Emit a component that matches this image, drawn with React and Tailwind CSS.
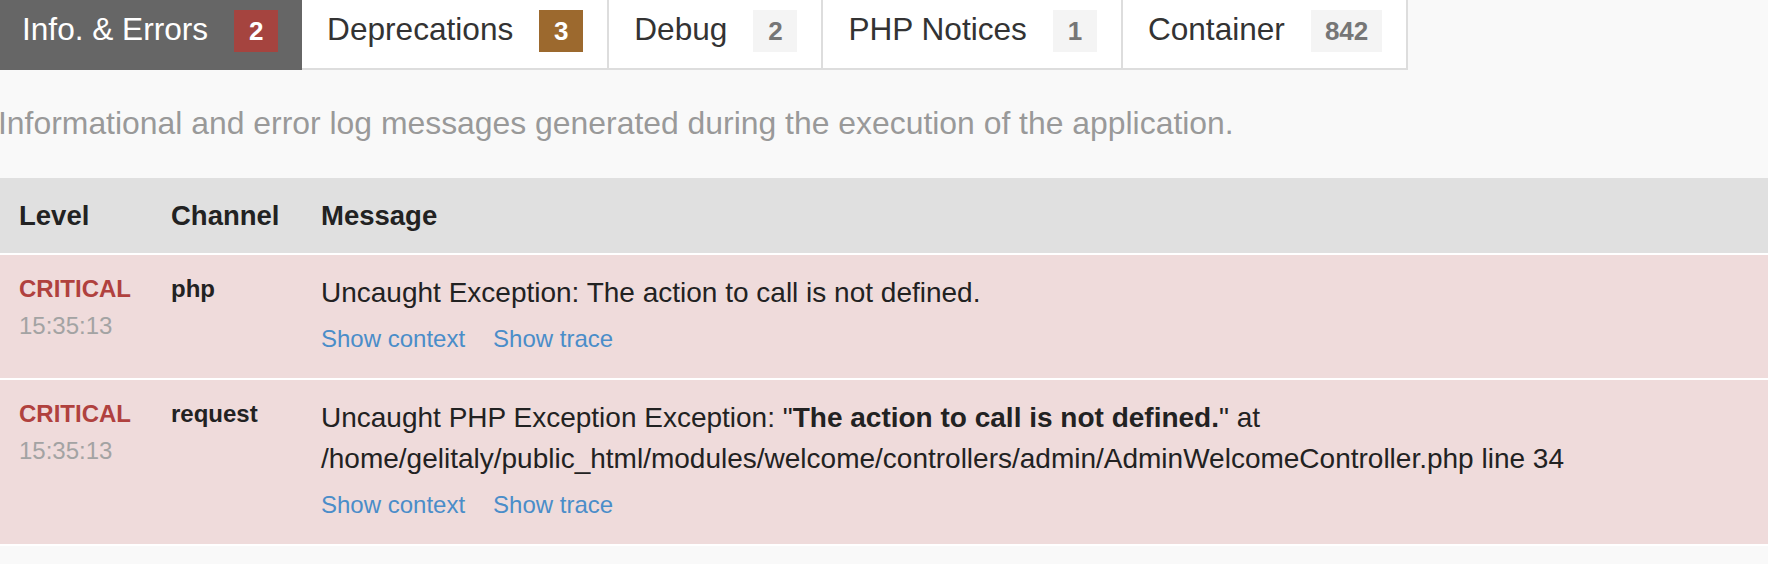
import React from 'react';

const tabs = [
    { label: 'Info. & Errors', count: 2, active: true, badge: 'bg-[#a5443f] text-white' },
    { label: 'Deprecations', count: 3, badge: 'bg-[#9c692e] text-white' },
    { label: 'Debug', count: 2, badge: 'bg-[#f4f4f4] text-[#767676]' },
    { label: 'PHP Notices', count: 1, badge: 'bg-[#f4f4f4] text-[#767676]' },
    { label: 'Container', count: 842, badge: 'bg-[#f4f4f4] text-[#767676]' },
];

function Tab({ tab, first }) {
    return (
        <div
            className={`flex items-start gap-[26px] h-[70px] pt-[10px] border-b-2 ${first ? 'pl-[22px] pr-[24px]' : 'pl-[25px] pr-[24px] border-r-2'} ${tab.active ? 'bg-[#666] border-[#666] text-white' : 'bg-white border-[#dddddd] text-[#333]'}`}
        >
            <span className="text-[31.6px] leading-[38px] whitespace-nowrap">{tab.label}</span>
            <span className={`h-[42px] min-w-[44px] px-[14px] flex items-center justify-center text-[26px] font-bold ${tab.badge}`}>
                {tab.count}
            </span>
        </div>
    );
}

function LogRow({ channel, children }) {
    return (
        <div className="grid grid-cols-[152px_150px_1fr] bg-[#efdbdb] border-b-2 border-white">
            <div className="pl-[19px] pt-[15px] text-[24px] leading-[37px]">
                <div className="font-bold text-[#b0413e]">CRITICAL</div>
                <div className="text-[#a3a3a3]">15:35:13</div>
            </div>
            <div className="pl-[19px] pt-[15px] text-[24px] leading-[37px] font-bold text-[#222]">{channel}</div>
            <div className="pl-[19px] pr-[20px] pt-[17px] pb-[23px]">
                <div className="text-[28px] leading-[41px] text-[#222]">{children}</div>
                <div className="mt-[10px] flex gap-[28px] text-[24px] leading-[32px] text-[#4a8dc9]">
                    <a href="#">Show context</a>
                    <a href="#">Show trace</a>
                </div>
            </div>
        </div>
    );
}

export default function App() {
    return (
        <div className="min-h-[564px] bg-[#f9f9f9] font-['Liberation_Sans',Arial,sans-serif] overflow-hidden">
            <div className="flex">
                {tabs.map((t, i) => (
                    <Tab key={t.label} tab={t} first={i === 0} />
                ))}
            </div>

            <p className="ml-[-2px] pt-[31px] pb-[32px] text-[31.9px] leading-[45px] text-[#999] whitespace-nowrap">
                Informational and error log messages generated during the execution of the application.
            </p>

            <div className="grid grid-cols-[152px_150px_1fr] h-[77px] items-center bg-[#e0e0e0] border-b-2 border-white text-[27.5px] font-bold text-[#222]">
                <div className="pl-[19px]">Level</div>
                <div className="pl-[19px]">Channel</div>
                <div className="pl-[19px]">Message</div>
            </div>

            <LogRow channel="php">Uncaught Exception: The action to call is not defined.</LogRow>
            <LogRow channel="request">
                Uncaught PHP Exception Exception: "<b>The action to call is not defined.</b>" at /home/gelitaly/public_html/modules/welcome/controllers/admin/AdminWelcomeController.php line 34
            </LogRow>
        </div>
    );
}
